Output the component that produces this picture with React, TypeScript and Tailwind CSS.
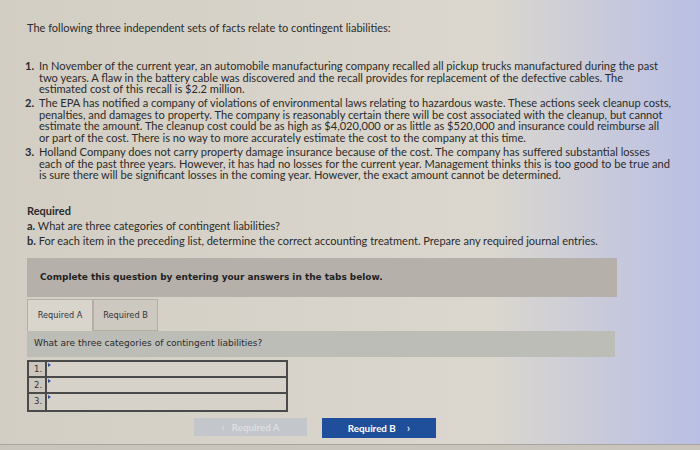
import React from 'react';

const body = { fontFamily: 'Lato, "Open Sans", Arial, sans-serif' };
const verdana = { fontFamily: '"DejaVu Sans", Verdana, sans-serif' };

const facts: string[][] = [
  [
    'In November of the current year, an automobile manufacturing company recalled all pickup trucks manufactured during the past',
    'two years. A flaw in the battery cable was discovered and the recall provides for replacement of the defective cables. The',
    'estimated cost of this recall is $2.2 million.',
  ],
  [
    'The EPA has notified a company of violations of environmental laws relating to hazardous waste. These actions seek cleanup costs,',
    'penalties, and damages to property. The company is reasonably certain there will be cost associated with the cleanup, but cannot',
    'estimate the amount. The cleanup cost could be as high as $4,020,000 or as little as $520,000 and insurance could reimburse all',
    'or part of the cost. There is no way to more accurately estimate the cost to the company at this time.',
  ],
  [
    'Holland Company does not carry property damage insurance because of the cost. The company has suffered substantial losses',
    'each of the past three years. However, it has had no losses for the current year. Management thinks this is too good to be true and',
    'is sure there will be significant losses in the coming year. However, the exact amount cannot be determined.',
  ],
];

const AnswerRow: React.FC<{ n: number }> = ({ n }) => (
  <div className="flex h-[16px] border-b-2 border-[#4a4a4a] last:border-b-0">
    <div className="w-[18px] border-r-2 border-[#4a4a4a] bg-[#cbc7bf] text-[8.5px] pl-[5px] leading-[14px] text-[#333]" style={verdana}>
      {n}.
    </div>
    <div className="relative flex-1 bg-[#d6d2ca]">
      <span className="absolute left-[1px] top-[1px] h-0 w-0 border-y-[2px] border-l-[3px] border-y-transparent border-l-[#2f4f8f]" />
    </div>
  </div>
);

export default function App() {
  return (
    <div className="relative w-[700px] h-[450px] overflow-hidden bg-gradient-to-r from-[#d3cec4] via-[#dbd7ce] via-70% to-[#b9bfe4] text-[#2b2b2b]" style={body}>
      <div className="pl-[27px] pt-[21px]">
        <p className="text-[11px] leading-[14px]">The following three independent sets of facts relate to contingent liabilities:</p>

        <ol className="mt-[25px] text-[11.1px] leading-[11.6px] flex flex-col gap-[2.5px]">
          {facts.map((lines, i) => (
            <li key={i} className="flex">
              <span className="w-[14px] font-bold -ml-[2px]">{i + 1}.</span>
              <div className="whitespace-nowrap">
                {lines.map((l, j) => (
                  <div key={j}>{l}</div>
                ))}
              </div>
            </li>
          ))}
        </ol>

        <div className="mt-[22px] text-[11px] leading-[15px]">
          <div className="font-bold">Required</div>
          <div><span className="font-bold">a.</span> What are three categories of contingent liabilities?</div>
          <div><span className="font-bold">b.</span> For each item in the preceding list, determine the correct accounting treatment. Prepare any required journal entries.</div>
        </div>

        <div className="mt-[10px] w-[590px] h-[39px] bg-[#b5b1aa] flex items-center pl-[13px]">
          <span className="text-[8.95px] font-bold text-[#222]" style={verdana}>
            Complete this question by entering your answers in the tabs below.
          </span>
        </div>

        <div className="mt-[2px] flex text-[8.2px] text-[#333]" style={verdana}>
          <div className="w-[66px] h-[32px] border border-[#b3afa8] border-b-0 bg-[#d9d5cd] flex items-center justify-center">Required A</div>
          <div className="w-[65px] h-[32px] border border-[#b3afa8] bg-[#cdc9c1] flex items-center justify-center">Required B</div>
        </div>

        <div className="w-[588px] h-[26px] bg-[#bdbdb8] flex items-center pl-[7px]">
          <span className="text-[9px] text-[#2a2a2a]" style={verdana}>What are three categories of contingent liabilities?</span>
        </div>

        <div className="mt-[3px] w-[261px] border-2 border-[#4a4a4a] flex flex-col">
          {[1, 2, 3].map((n) => (
            <AnswerRow key={n} n={n} />
          ))}
        </div>

        <div className="mt-[6px] flex gap-[15px] pl-[167px]">
          <div className="w-[113px] h-[18px] bg-[#c3c6ca] flex items-center justify-center gap-[7px] text-[9.8px] font-bold text-[#dcdfe3]">
            <span className="text-[12px] leading-none font-normal">&lsaquo;</span>
            <span>Required A</span>
          </div>
          <div className="w-[114px] h-[20px] bg-[#1f4f9b] flex items-center justify-center gap-[11px] text-[9.8px] font-bold text-white">
            <span>Required B</span>
            <span className="text-[12px] leading-none font-normal">&rsaquo;</span>
          </div>
        </div>
      </div>
      <div className="absolute left-0 right-0 bottom-0 h-[6px] border-t border-[#a9a59e] bg-[#c9c5bd]" />
    </div>
  );
}
